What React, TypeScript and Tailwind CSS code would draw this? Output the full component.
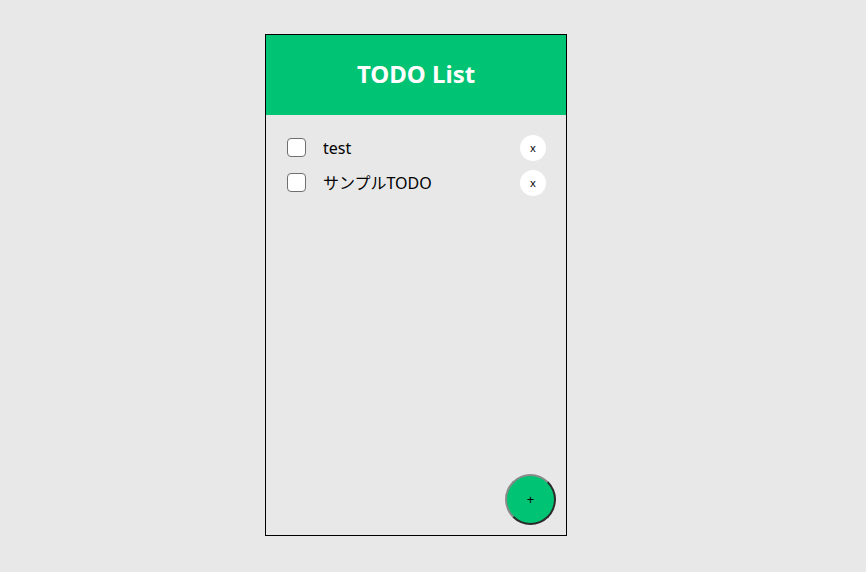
import React from "react";

const items = ["test", "サンプルTODO"];

export default function App() {
  return (
    <div
      className="w-[866px] h-[572px] bg-[#e8e8e8] pt-[34px] pl-[265px]"
      style={{ fontFamily: '"Noto Sans", "Noto Sans CJK JP", sans-serif' }}
    >
      <div className="w-[302px] h-[502px] border border-black flex flex-col bg-[#e8e8e8]">
        <div className="h-[80px] bg-[#00c373] flex items-center justify-center">
          <h1 className="text-white text-[24px] font-bold leading-none -mt-[2px]">TODO List</h1>
        </div>
        <div className="flex flex-col pt-[15px]">
          {items.map((t) => (
            <div key={t} className="h-[35px] flex items-center pl-[21px] pr-[20px]">
              <div className="w-[19px] h-[19px] rounded-[4px] border-[1.5px] border-[#6f6f6f] bg-white" />
              <span className="ml-[17px] text-[16px] text-black flex-1">{t}</span>
              <div className="w-[26px] h-[26px] rounded-full bg-white flex items-center justify-center text-[11px] text-black leading-none">
                x
              </div>
            </div>
          ))}
        </div>
        <div className="mt-auto flex justify-end pr-[10px] pb-[10px]">
          <div className="w-[51px] h-[51px] rounded-full bg-[#00c373] border-2 border-t-[#8a8a8a] border-l-[#8a8a8a] border-r-[#2a2a2a] border-b-[#2a2a2a] flex items-center justify-center text-[13px] text-black leading-none">
            +
          </div>
        </div>
      </div>
    </div>
  );
}
